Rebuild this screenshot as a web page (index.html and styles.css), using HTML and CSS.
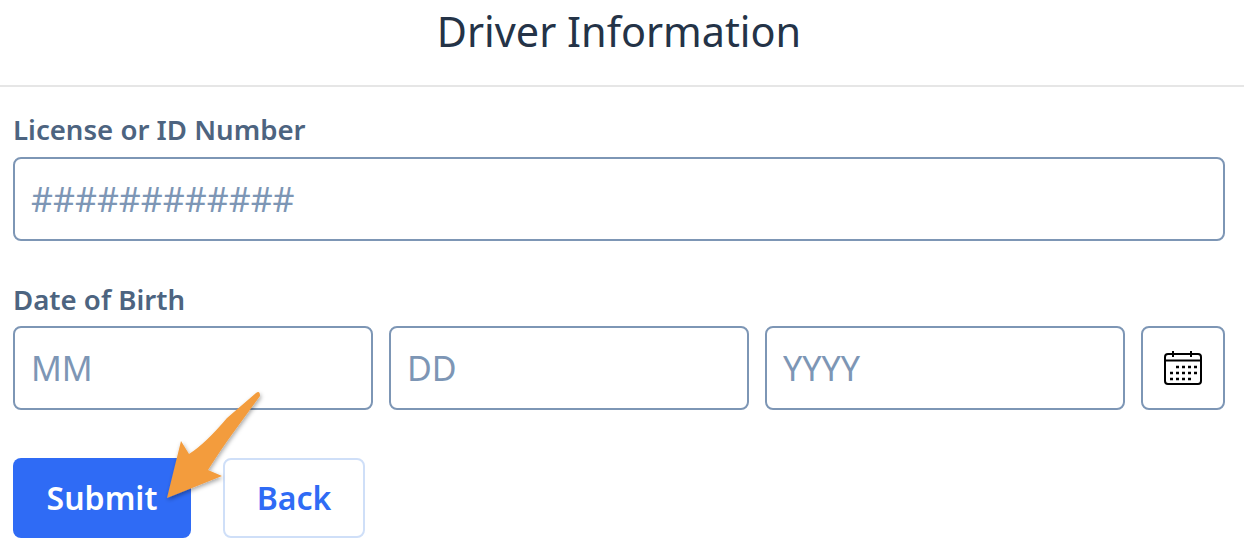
FILE: index.html
```html
<!DOCTYPE html>
<html lang="en">
<head>
    <meta charset="UTF-8">
    <meta name="viewport" content="width=device-width, initial-scale=1.0">
    <title>Driver Information</title>
    <link rel="stylesheet" href="styles.css">
</head>
<body>
    <h1 class="page-title">Driver Information</h1>

    <form class="driver-form">
        <label class="field-label" for="license">License or ID Number</label>
        <input class="text-input" id="license" type="text" placeholder="############">

        <label class="field-label dob-label" for="month">Date of Birth</label>
        <div class="dob-row">
            <input class="text-input" id="month" type="text" placeholder="MM">
            <input class="text-input" type="text" placeholder="DD">
            <input class="text-input" type="text" placeholder="YYYY">
            <button class="calendar-button" type="button" aria-label="Open calendar">
                <svg width="38" height="34" viewBox="0 0 38 34" fill="none" stroke="#000" stroke-width="2">
                    <rect x="1" y="3" width="36" height="30" rx="3"/>
                    <path d="M1 9.5h36M9 0v6M27 0v6"/>
                    <!-- calendar dots -->
                    <path stroke-width="2.6" stroke-dasharray="3 3" d="M12 16h21M6 22h27M6 28h21"/>
                </svg>
            </button>
        </div>

        <div class="button-row">
            <button class="btn btn-primary" type="button">Submit</button>
            <button class="btn btn-outline" type="button">Back</button>
        </div>
    </form>

    <!-- annotation arrow on top of the screenshot -->
    <svg class="arrow" width="1244" height="552" viewBox="0 0 1244 552">
        <defs>
            <filter id="arrow-shadow" x="-30%" y="-30%" width="160%" height="160%">
                <feDropShadow dx="1" dy="2" stdDeviation="2" flood-color="#000" flood-opacity="0.35"/>
            </filter>
        </defs>
        <path fill="#f39c3d" filter="url(#arrow-shadow)" d="M256 393 Q260 390 260 396 L233 433 Q222 448 208 470 L222 476 L167 498 L181 441 L189 454 Q205 444 227 418 Z"/>
    </svg>
</body>
</html>
```

FILE: styles.css
```css
* {
    margin: 0;
    padding: 0;
    box-sizing: border-box;
}
html, body {
    height: 552px;
    overflow: hidden;
}
body {
    background: #fff;
    font-family: "Noto Sans", "Open Sans", sans-serif;
    position: relative;
}
.page-title {
    height: 87px;
    padding: 3px 6px 0 0;
    border-bottom: 2px solid #e6e6e6;
    text-align: center;
    font-size: 41.4px;
    line-height: 56px;
    font-weight: 400;
    color: #243347;
}
.driver-form {
    padding: 23px 19px 0 13px;
}
.field-label {
    display: block;
    height: 47px;
    font-size: 27.6px;
    line-height: 38px;
    font-weight: 600;
    color: #4d6480;
}
.dob-label {
    margin-top: 39px;
    height: 46px;
}
.text-input {
    display: block;
    width: 100%;
    height: 84px;
    padding: 0 16px;
    border: 2px solid #7d96b5;
    border-radius: 8px;
    background: #fff;
    font-family: inherit;
    font-size: 34px;
    color: #243347;
    outline: none;
}
.text-input::placeholder {
    color: #7d96b5;
    opacity: 1;
}
.dob-row {
    display: flex;
    gap: 16px;
}
.dob-row .text-input {
    width: 360px;
    flex: none;
}
.calendar-button {
    width: 84px;
    height: 84px;
    flex: none;
    display: flex;
    align-items: center;
    justify-content: center;
    border: 2px solid #7d96b5;
    border-radius: 8px;
    background: #fff;
}
.button-row {
    display: flex;
    gap: 32px;
    margin-top: 48px;
}
.btn {
    height: 80px;
    padding-bottom: 2px;
    border-radius: 8px;
    font-family: inherit;
    font-size: 32px;
    font-weight: 600;
}
.btn-primary {
    width: 178px;
    border: none;
    background: #2f6bf5;
    color: #fff;
}
.btn-outline {
    width: 142px;
    border: 2px solid #cfdff8;
    background: #fff;
    color: #2f6bf5;
}
.arrow {
    position: absolute;
    top: 0;
    left: 0;
    pointer-events: none;
}
```
